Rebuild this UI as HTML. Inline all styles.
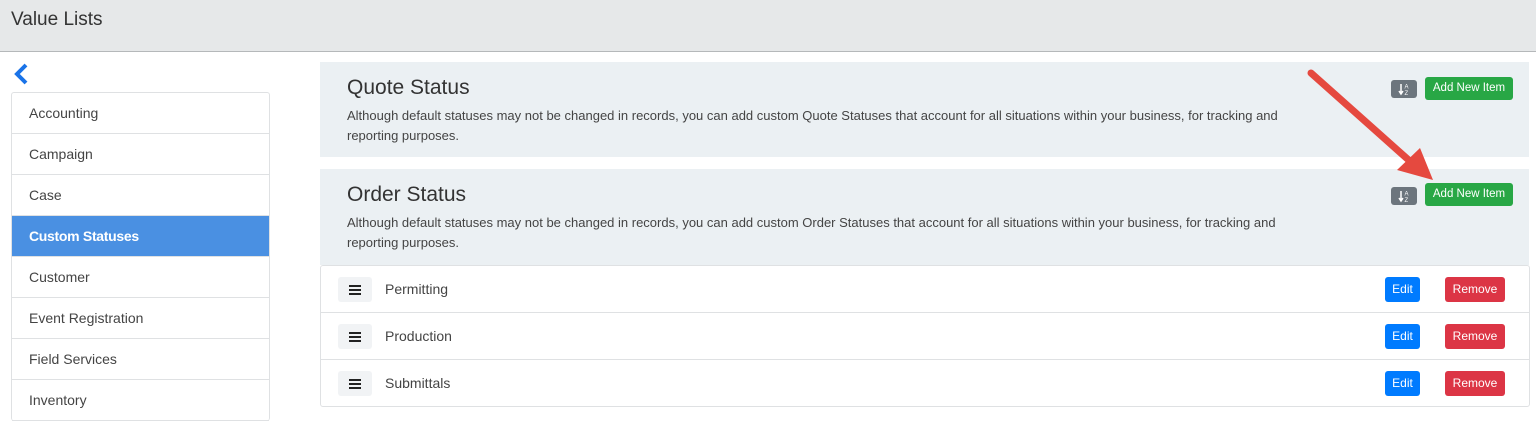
<!DOCTYPE html><html><head><style>
body{margin:0;width:1536px;height:413px;overflow:hidden;font-family:"Liberation Sans",sans-serif;background:#fff;position:relative}
.hdr{position:absolute;left:0;top:0;width:1536px;height:51px;background:#e6e8e9;border-bottom:1px solid #b5b8ba}
.hdr span{position:absolute;left:11px;top:9px;font-size:19px;color:#333}
.side{position:absolute;left:11px;top:92px;width:257px;border:1px solid #dfe1e3;border-radius:3px;border-bottom:none}
.side div{height:40px;border-bottom:1px solid #dfe1e3;font-size:14px;color:#444;line-height:40px;padding-left:17px}
.side .act{background:#4a90e2;color:#fff;font-weight:bold;letter-spacing:-0.3px}
.panel{position:absolute;left:320px;width:1209px;background:#ebf0f3}
.panel h2{position:absolute;left:27px;top:14px;margin:0;font-weight:normal;font-size:21px;color:#333}
.panel p{position:absolute;left:27px;top:44px;margin:0;width:980px;font-size:13px;line-height:20px;color:#444}
.add{position:absolute;left:1105px;top:15px;width:88px;height:23px;background:#28a745;border-radius:3px;color:#fff;font-size:11.5px;text-align:center;line-height:23px}
.sort{position:absolute;left:1071px;top:18px;width:26px;height:18px;background:#6c757d;border-radius:3px}
.rows{position:absolute;left:320px;top:265px;width:1208px;border:1px solid #dfe1e3;border-radius:3px}
.row{height:46px;border-bottom:1px solid #dfe1e3;position:relative}
.row:last-child{border-bottom:none}
.ham{position:absolute;left:17px;top:11px;width:34px;height:25px;background:#f1f3f5;border-radius:3px}
.ham i{position:absolute;left:11px;width:12px;height:2px;background:#222}
.lbl{position:absolute;left:64px;top:15px;font-size:14px;color:#444}
.ed{position:absolute;left:1064px;top:11px;width:35px;height:25px;background:#007bff;border-radius:3px;color:#fff;font-size:12px;text-align:center;line-height:25px}
.rm{position:absolute;left:1124px;top:11px;width:60px;height:25px;background:#dc3545;border-radius:3px;color:#fff;font-size:12px;text-align:center;line-height:25px}
</style></head><body>
<div class="hdr"><span>Value Lists</span></div>
<svg style="position:absolute;left:11px;top:62px" width="20" height="24"><path d="M15 3 L6 12 L15 21" stroke="#1a73e8" stroke-width="4" fill="none"/></svg>
<div class="side"><div>Accounting</div><div>Campaign</div><div>Case</div><div class="act">Custom Statuses</div><div>Customer</div><div>Event Registration</div><div>Field Services</div><div>Inventory</div></div>
<div class="panel" style="top:62px;height:95px"><h2>Quote Status</h2><p>Although default statuses may not be changed in records, you can add custom Quote Statuses that account for all situations within your business, for tracking and reporting purposes.</p><div class="sort"><svg width="26" height="18"><path d="M10 4v9M8 11l2 3 2-3" stroke="#fff" stroke-width="1.5" fill="none"/><text x="13.5" y="8.5" font-size="6" fill="#fff" font-family="Liberation Sans">A</text><text x="13.5" y="15" font-size="6" fill="#fff" font-family="Liberation Sans">Z</text></svg></div><div class="add">Add New Item</div></div>
<div class="panel" style="top:169px;height:96px"><h2>Order Status</h2><p>Although default statuses may not be changed in records, you can add custom Order Statuses that account for all situations within your business, for tracking and reporting purposes.</p><div class="sort"><svg width="26" height="18"><path d="M10 4v9M8 11l2 3 2-3" stroke="#fff" stroke-width="1.5" fill="none"/><text x="13.5" y="8.5" font-size="6" fill="#fff" font-family="Liberation Sans">A</text><text x="13.5" y="15" font-size="6" fill="#fff" font-family="Liberation Sans">Z</text></svg></div><div class="add" style="top:14px">Add New Item</div></div>
<div class="rows">
<div class="row"><div class="ham"><i style="top:8px"></i><i style="top:12px"></i><i style="top:16px"></i></div><span class="lbl">Permitting</span><div class="ed">Edit</div><div class="rm">Remove</div></div>
<div class="row"><div class="ham"><i style="top:8px"></i><i style="top:12px"></i><i style="top:16px"></i></div><span class="lbl">Production</span><div class="ed">Edit</div><div class="rm">Remove</div></div>
<div class="row"><div class="ham"><i style="top:8px"></i><i style="top:12px"></i><i style="top:16px"></i></div><span class="lbl">Submittals</span><div class="ed">Edit</div><div class="rm">Remove</div></div>
</div>
<svg style="position:absolute;left:0;top:0" width="1536" height="413"><line x1="1311" y1="73" x2="1412" y2="163" stroke="#e5493f" stroke-width="7" stroke-linecap="round"/><polygon points="1433,180 1397,170 1420,148" fill="#e5493f"/></svg>
</body></html>
